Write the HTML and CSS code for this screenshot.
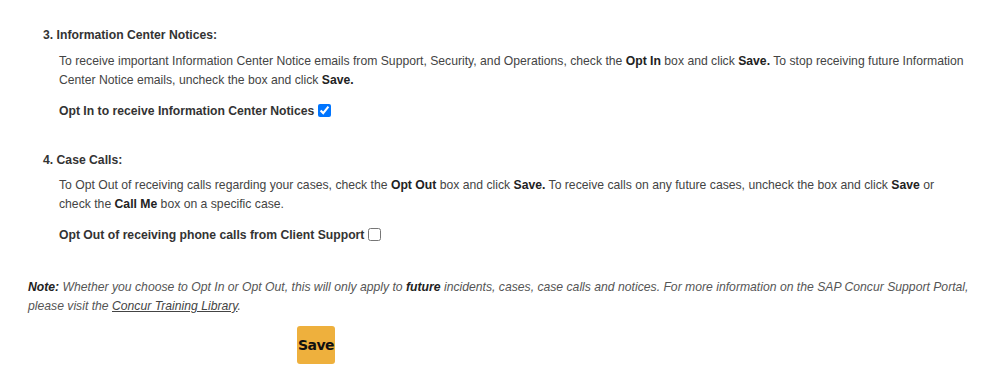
FILE: index.html
```html
<!DOCTYPE html>
<html lang="en">
<head>
    <meta charset="UTF-8">
    <title>Support Preferences</title>
    <link rel="stylesheet" href="styles.css">
</head>
<body>
    <div class="prefs">
        <div class="pref">
            <h3 class="pref-title">3. Information Center Notices:</h3>
            <div class="pref-body">
                <p>To receive important Information Center Notice emails from Support, Security, and Operations, check the <b>Opt In</b> box and click <b>Save.</b> To stop receiving future Information Center Notice emails, uncheck the box and click <b>Save.</b></p>
                <label class="opt">Opt In to receive Information Center Notices <input type="checkbox" checked></label>
            </div>
        </div>
        <div class="pref">
            <h3 class="pref-title">4. Case Calls:</h3>
            <div class="pref-body">
                <p>To Opt Out of receiving calls regarding your cases, check the <b>Opt Out</b> box and click <b>Save.</b> To receive calls on any future cases, uncheck the box and click <b>Save</b> or check the <b>Call Me</b> box on a specific case.</p>
                <label class="opt">Opt Out of receiving phone calls from Client Support <input type="checkbox"></label>
            </div>
        </div>
        <p class="note"><b>Note:</b> Whether you choose to Opt In or Opt Out, this will only apply to <b>future</b> incidents, cases, case calls and notices. For more information on the SAP Concur Support Portal, please visit the <a href="#">Concur Training Library</a>.</p>
        <div class="actions">
            <button class="save">Save</button>
        </div>
    </div>
</body>
</html>
```

FILE: styles.css
```css
body {
    margin: 0;
    background: #fff;
    font-family: 'Liberation Sans', Arial, sans-serif;
    font-size: 12.2px;
    color: #444;
}
.prefs {
    width: 942px;
    padding: 26px 0 0 28px;
}
.pref {
    padding-left: 15px;
    margin: 0 6px 31px 0;
}
.pref-title {
    margin: 0;
    font-size: 12.2px;
    line-height: 18px;
    font-weight: bold;
    color: #333;
}
.pref-body {
    padding-left: 16px;
}
.pref-body p {
    margin: 8px 0 12px;
    line-height: 19px;
}
.pref + .pref .pref-body p {
    margin-top: 7px;
}
.pref-body b, .note b {
    color: #222;
}
.opt {
    display: block;
    line-height: 18px;
    font-weight: bold;
    color: #333;
}
.opt input {
    width: 13px;
    height: 13px;
    margin: 0;
    vertical-align: -2px;
}
.note {
    margin: 34px 0 0;
    line-height: 19px;
    font-style: italic;
    color: #555;
}
.note a {
    color: #444;
}
.actions {
    padding: 10px 0 0 269px;
}
.save {
    width: 38px;
    height: 38px;
    padding: 0;
    border: none;
    border-radius: 3px;
    background: #eeb03d;
    font-family: 'DejaVu Sans', Verdana, sans-serif;
    font-weight: bold;
    font-size: 14px;
    letter-spacing: -0.6px;
    color: #111;
}
```
